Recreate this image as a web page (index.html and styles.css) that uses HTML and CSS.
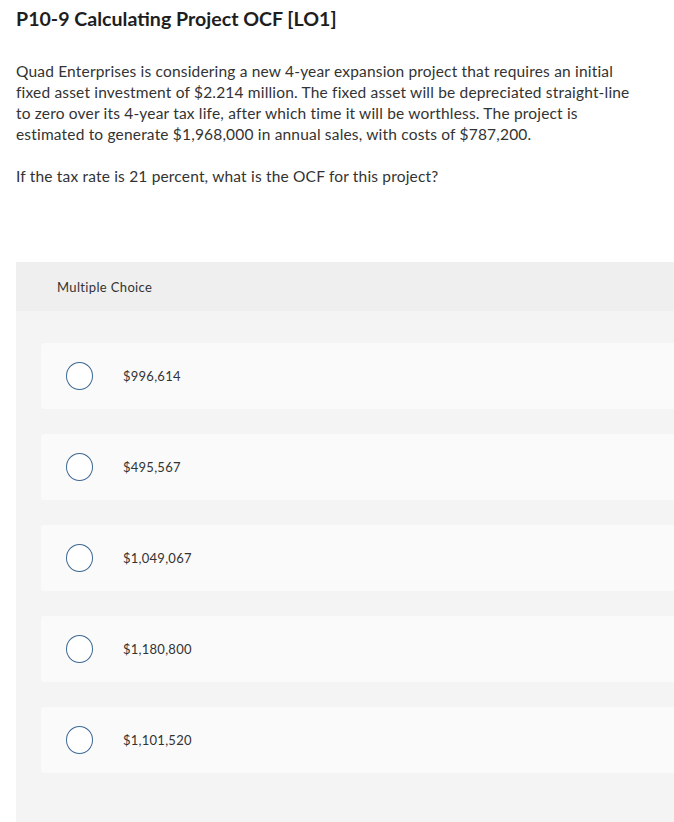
FILE: index.html
```html
<!DOCTYPE html>
<html>
<head>
<meta charset="utf-8">
<link rel="stylesheet" href="styles.css">
</head>
<body>
<div class="page">
  <h1 class="title">P10-9 Calculating Project OCF [LO1]</h1>
  <p class="para">Quad Enterprises is considering a new 4-year expansion project that requires an initial fixed asset investment of $2.214 million. The fixed asset will be depreciated straight-line to zero over its 4-year tax life, after which time it will be worthless. The project is estimated to generate $1,968,000 in annual sales, with costs of $787,200.</p>
  <p class="para question">If the tax rate is 21 percent, what is the OCF for this project?</p>
  <div class="panel">
    <div class="panel-head">Multiple Choice</div>
    <div class="panel-body">
      <div class="option"><span class="radio"></span><span class="label">$996,614</span></div>
      <div class="option"><span class="radio"></span><span class="label">$495,567</span></div>
      <div class="option"><span class="radio"></span><span class="label">$1,049,067</span></div>
      <div class="option"><span class="radio"></span><span class="label">$1,180,800</span></div>
      <div class="option"><span class="radio"></span><span class="label">$1,101,520</span></div>
    </div>
  </div>
</div>
</body>
</html>
```
FILE: styles.css
```css
html, body {
  margin: 0;
  padding: 0;
  background: #ffffff;
  overflow: hidden;
}
.page {
  padding-left: 16px;
  font-family: Lato, "Open Sans", sans-serif;
  color: #333333;
}
.title {
  margin: 0;
  padding-top: 7px;
  font-size: 19.6px;
  line-height: 24px;
  font-weight: 700;
  color: #1e1e1e;
}
.para {
  margin: 30px 0 0 0;
  width: 618px;
  font-size: 15.5px;
  letter-spacing: 0.18px;
  line-height: 21px;
}
.question {
  margin-top: 21px;
}
.panel {
  margin-top: 75px;
  width: 700px;
  height: 600px;
  background: #f4f4f4;
}
.panel-head {
  height: 49px;
  background: #efefef;
  padding-left: 41px;
  display: flex;
  align-items: center;
  font-size: 13px;
  letter-spacing: 0.35px;
}
.panel-body {
  padding: 32px 0 0 25px;
  display: flex;
  flex-direction: column;
  gap: 25px;
}
.option {
  height: 66px;
  background: #fafafa;
  border-radius: 3px;
  display: flex;
  align-items: center;
  padding-left: 25px;
  font-size: 13px;
  letter-spacing: 0.25px;
}
.radio {
  width: 25px;
  height: 26px;
  border: 1.5px solid #3d6893;
  border-radius: 50%;
  background: #ffffff;
  flex: none;
}
.label {
  margin-left: 30px;
}
```
